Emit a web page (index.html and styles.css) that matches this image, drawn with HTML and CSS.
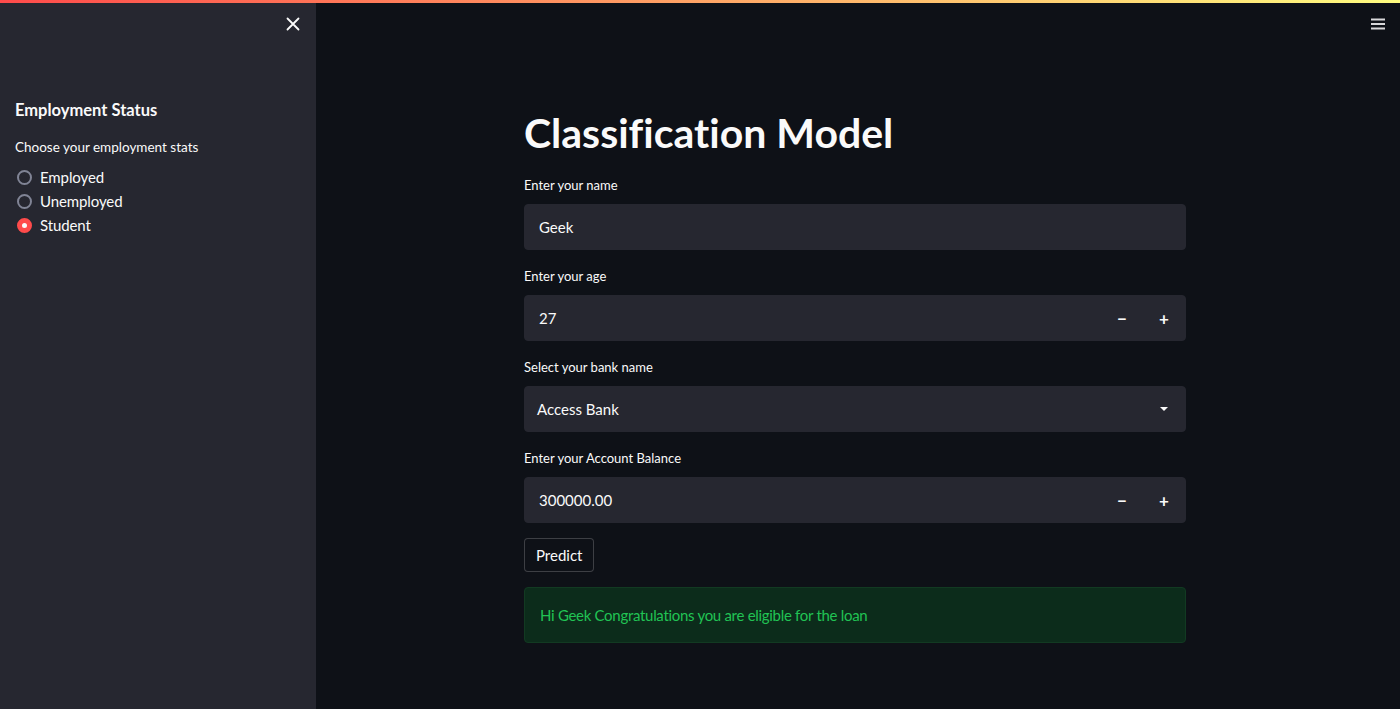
FILE: index.html
```html
<!DOCTYPE html>
<html lang="en">
<head>
    <meta charset="UTF-8">
    <meta name="viewport" content="width=device-width, initial-scale=1.0">
    <title>Classification Model</title>
    <link rel="stylesheet" href="styles.css">
</head>
<body>
<div class="top-bar"></div>
<div class="app">
    <aside class="sidebar">
        <div class="sidebar-top">
            <button class="close-btn" aria-label="Close sidebar">
                <svg width="14" height="14" viewBox="0 0 14 14"><path d="M1.5 1.5 L12.5 12.5 M12.5 1.5 L1.5 12.5" stroke="#fafafa" stroke-width="1.8" stroke-linecap="round"/></svg>
            </button>
        </div>
        <h3>Employment Status</h3>
        <p class="radio-label">Choose your employment stats</p>
        <div class="radio-group">
            <label class="radio"><span class="dot"></span>Employed</label>
            <label class="radio"><span class="dot"></span>Unemployed</label>
            <label class="radio checked"><span class="dot"></span>Student</label>
        </div>
    </aside>

    <main class="main">
        <div class="menu-btn">
            <svg width="16" height="12" viewBox="0 0 16 12"><path d="M1 1.5h14M1 6h14M1 10.5h14" stroke="#d8d8da" stroke-width="1.8"/></svg>
        </div>
        <div class="block">
            <h1>Classification Model</h1>

            <div class="field">
                <label>Enter your name</label>
                <div class="input">Geek</div>
            </div>

            <div class="field">
                <label>Enter your age</label>
                <div class="input number">
                    <span class="value">27</span>
                    <span class="step">&minus;</span>
                    <span class="step">+</span>
                </div>
            </div>

            <div class="field">
                <label>Select your bank name</label>
                <div class="input select">
                    <span class="value">Access Bank</span>
                    <svg width="10" height="6" viewBox="0 0 10 6"><path d="M1 1h8L5 5z" fill="#fafafa"/></svg>
                </div>
            </div>

            <div class="field">
                <label>Enter your Account Balance</label>
                <div class="input number">
                    <span class="value">300000.00</span>
                    <span class="step">&minus;</span>
                    <span class="step">+</span>
                </div>
            </div>

            <button class="predict">Predict</button>

            <div class="alert">Hi Geek Congratulations you are eligible for the loan</div>
        </div>
    </main>
</div>
</body>
</html>
```

FILE: styles.css
```css
body {
    margin: 0;
    padding: 0;
    background-color: #0e1117;
    color: #fafafa;
    font-family: Lato, "Noto Sans", sans-serif;
    font-variant-ligatures: none;
    height: 709px;
    overflow: hidden;
}

.top-bar {
    height: 3px;
    background: linear-gradient(90deg, #ff4b4b, #fffd80);
}

.app {
    display: flex;
    height: 706px;
}

.sidebar {
    width: 316px;
    background-color: #262730;
    padding: 0 15px;
    box-sizing: border-box;
}

.sidebar-top {
    display: flex;
    justify-content: flex-end;
    padding: 14px 1px 0 0;
    height: 60px;
    box-sizing: border-box;
}

.close-btn {
    background: none;
    border: none;
    padding: 0;
    width: 14px;
    height: 14px;
    cursor: pointer;
}

.sidebar h3 {
    margin: 36px 0 0;
    font-size: 16.5px;
    font-weight: 700;
    line-height: 22px;
}

.radio-label {
    margin: 16px 0 0;
    font-size: 13.5px;
    line-height: 20px;
}

.radio-group {
    margin-top: 8px;
}

.radio {
    display: flex;
    align-items: center;
    height: 24px;
    font-size: 15px;
    letter-spacing: -0.1px;
}

.dot {
    width: 11px;
    height: 11px;
    border: 2px solid #808495;
    border-radius: 50%;
    margin: 0 8px 0 2px;
    box-sizing: content-box;
}

.radio.checked .dot {
    width: 5px;
    height: 5px;
    border: 5px solid #ff4b4b;
    background-color: #fafafa;
}

.main {
    flex: 1;
    position: relative;
}

.menu-btn {
    position: absolute;
    top: 11px;
    right: 14px;
}

.block {
    width: 662px;
    margin: 108px 0 0 208px;
}

h1 {
    margin: 0 0 20px;
    font-size: 41px;
    font-weight: 700;
    line-height: 44px;
}

.field {
    margin-bottom: 16px;
}

.field:nth-of-type(4) {
    margin-bottom: 15px;
}

.field label {
    display: block;
    font-size: 13px;
    line-height: 20px;
    margin-bottom: 9px;
}

.input {
    height: 46px;
    background-color: #262730;
    border: 1px solid #262730;
    border-radius: 4px;
    box-sizing: border-box;
    display: flex;
    align-items: center;
    padding: 0 14px;
    font-size: 15px;
}

.input .value {
    flex: 1;
}

.number {
    padding-right: 0;
}

.step {
    width: 42px;
    text-align: center;
    font-size: 17px;
    font-weight: 700;
}

.select {
    padding: 0 16px 0 12px;
}

.predict {
    background-color: #0e1117;
    color: #fafafa;
    border: 1px solid rgba(250, 250, 250, 0.2);
    border-radius: 4px;
    font-family: inherit;
    font-size: 15px;
    height: 34px;
    padding: 0 11px;
}

.alert {
    margin-top: 15px;
    height: 56px;
    background-color: #0c2c1b;
    border: 1px solid #123a22;
    border-radius: 4px;
    box-sizing: border-box;
    display: flex;
    align-items: center;
    padding: 0 15px;
    color: #21c354;
    font-size: 15px;
    letter-spacing: -0.3px;
}
```
